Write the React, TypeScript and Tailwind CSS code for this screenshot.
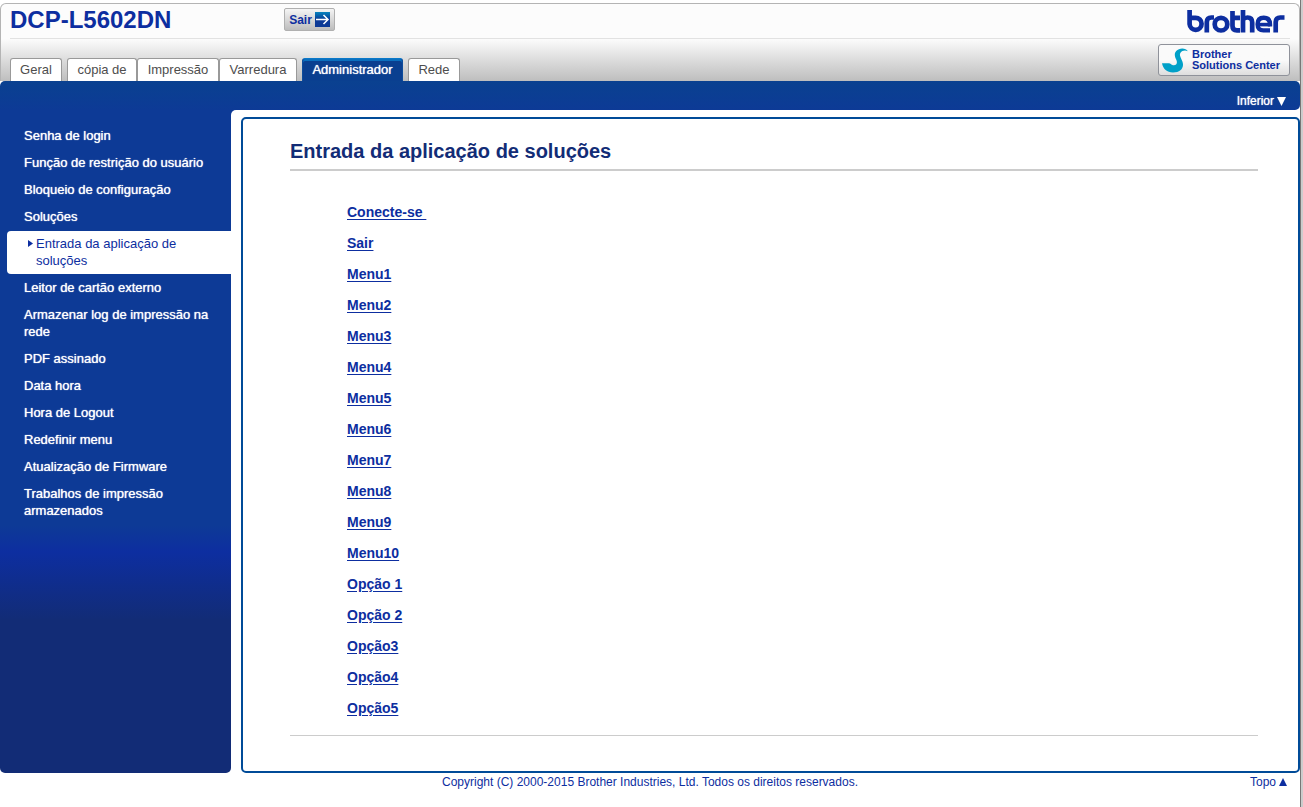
import React from "react";

const tabs = [
  { label: "Geral", width: "w-[52px]", gap: "mr-[5px]" },
  { label: "cópia de", width: "w-[70px]", gap: "" },
  { label: "Impressão", width: "w-[82px]", gap: "" },
  { label: "Varredura", width: "w-[78px]", gap: "mr-[5px]" },
  { label: "Administrador", width: "w-[101px]", gap: "mr-[5px]", active: true },
  { label: "Rede", width: "w-[52px]", gap: "" },
];

const sideLinks = [
  "Senha de login",
  "Função de restrição do usuário",
  "Bloqueio de configuração",
  "Soluções",
  "Entrada da aplicação de soluções",
  "Leitor de cartão externo",
  "Armazenar log de impressão na rede",
  "PDF assinado",
  "Data hora",
  "Hora de Logout",
  "Redefinir menu",
  "Atualização de Firmware",
  "Trabalhos de impressão armazenados",
];

const menuLinks = [
  "Conecte-se\u00a0",
  "Sair",
  "Menu1",
  "Menu2",
  "Menu3",
  "Menu4",
  "Menu5",
  "Menu6",
  "Menu7",
  "Menu8",
  "Menu9",
  "Menu10",
  "Opção 1",
  "Opção 2",
  "Opção3",
  "Opção4",
  "Opção5",
];

function BrotherLogo() {
  return (
    <svg
      role="img"
      aria-label="brother"
      className="h-[24px] w-[98px]"
      viewBox="0 0 98 24"
      fill="none"
      stroke="#0d2ea0"
      strokeWidth="4.7"
    >
      <path d="M2.600 0V14.200a6 6 0 1 0 6-6.400H3.500" />
      <path d="M19.800 22.500V12q0-4.500 4.500-4.500H27" />
      <ellipse cx="34" cy="14.200" rx="6.300" ry="6.300" />
      <path d="M45.500 1V16q0 4.400 4.400 4.400H53M45.500 7.800H53" />
      <path d="M56 0V22.500M56 9.500q2-2 4.500-2 4.700 0 4.700 5V22.500" />
      <path d="M71 14.600h12" strokeWidth="3.6" />
      <path d="M83 16.400v-1.800q0-6.800-6.200-6.800t-6.200 6.400 6.200 6.200H83" strokeWidth="4.400" />
      <path d="M88.700 22.500V12q0-4.500 4.500-4.500H97.500" />
    </svg>
  );
}

function SolutionsMark() {
  return (
    <svg aria-hidden="true" className="h-[25px] w-[27px] shrink-0" viewBox="0 0 27 25" fill="#00a0c8">
      <path d="M25.800 3.300C24-.3 17.300-.5 14.200 3c-2.500 3-1.200 6 .2 9 1.400 3.500-.2 5.700-3.400 5.200C9 16.800 8.500 15.300 7 15.300H0c1 5.700 5 9.200 11 9.200 8 0 11.700-5.300 9.300-11.300-1.600-4-3.300-6-1.800-8.400 1.500-2.200 4.700-2.900 7.300-1.500Z" />
    </svg>
  );
}

export default function App() {
  return (
    <div className="flex min-h-screen bg-white font-['Liberation_Sans',Arial,sans-serif] text-[#0d2ea0]">
      <div className="flex min-w-0 flex-1 flex-col">
        <header className="mt-[3px] rounded-t-[6px] border border-b-0 border-[#b4b4b4] bg-linear-to-b from-[#fcfcfc] from-45% to-[#bebebe]">
          <div className="mx-[9px] flex h-[35px] items-start border-b border-[#e2e2e2]">
            <h1 className="w-[274px] text-[24px] leading-[32px] font-bold">DCP-L5602DN</h1>
            <button
              type="button"
              className="mt-1 flex h-[23px] w-[51px] items-center justify-center gap-[3px] rounded-[2px] border border-[#b0b0b0] bg-linear-to-b from-[#f5f5f5] to-[#bdbdbd] text-[12px] font-bold"
            >
              Sair
              <svg aria-hidden="true" className="size-[15px] bg-linear-to-b from-[#0a83bd] to-[#0d3a96] to-50%" viewBox="0 0 15 15" fill="none" stroke="white" strokeWidth="1.5">
                <path d="M1 7.500h12M8.500 3l4.500 4.500L8.500 12" />
              </svg>
            </button>
            <div className="mt-[6px] mr-[5px] ml-auto">
              <BrotherLogo />
            </div>
          </div>
          <div className="flex h-[42px] items-end justify-between pr-[9px] pl-[9px]">
            <nav aria-label="Seções" className="flex items-end">
              {tabs.map((t) => (
                <a
                  key={t.label}
                  href="#"
                  className={`flex h-[23px] items-center justify-center rounded-t-[3px] border border-b-0 whitespace-nowrap ${t.width} ${t.gap} ${
                    t.active
                      ? "border-[#0d4c9c] border-t-[#0a78c8] bg-[#0a3f90] text-[13px] text-white shadow-[inset_0_2px_0_#0a6fbe] [text-shadow:0_0_1px_white]"
                      : "border-[#999999] bg-white text-[13px] text-[#4d4d4d]"
                  }`}
                >
                  {t.label}
                </a>
              ))}
            </nav>
            <a
              href="#"
              className="mb-[5px] flex h-[32px] w-[132px] items-center gap-[3px] rounded-[3px] border border-[#8f929a] bg-linear-to-b from-[#fafafa] from-50% to-[#dedede] pl-[3px] text-[11px] leading-[11px] font-bold"
            >
              <SolutionsMark />
              <span>
                Brother
                <br />
                Solutions Center
              </span>
            </a>
          </div>
        </header>

        <div className="flex h-[29px] items-end justify-end rounded-t-[5px] rounded-br-[5px] bg-linear-to-b from-[#0a4190] to-[#0d3a96] pr-[14px]">
          <a href="#" className="flex items-center gap-[3px] text-[12px] leading-[17px] text-white [text-shadow:0_0_1px_white]">
            Inferior
            <svg aria-hidden="true" className="h-[9px] w-[9px]" viewBox="0 0 9 9" fill="currentColor">
              <path d="M0 0h9L4.500 9z" />
            </svg>
          </a>
        </div>

        <div className="flex bg-[linear-gradient(#0d3a96,#0d3a96)] bg-size-[240px_10px] bg-no-repeat">
          <nav
            aria-label="Administrador"
            className="w-[231px] shrink-0 rounded-b-[5px] bg-[linear-gradient(to_bottom,#0d3a96_0px,#0d3a96_415px,#0d2ea0_442px,#122c76_510px)] pt-[12px]"
          >
            <ul>
              {sideLinks.map((label) => (
                <li key={label}>
                  {label.startsWith("Entrada") ? (
                    <a href="#" aria-current="page" className="mt-px ml-[7px] flex rounded-l-[4px] bg-white pt-1 pr-8 pb-[5px] pl-[21px] text-[13px] leading-[17px]">
                      <svg aria-hidden="true" className="mt-[5px] mr-[3px] h-[7px] w-[5px] shrink-0" viewBox="0 0 5 7" fill="currentColor">
                        <path d="M0 0l5 3.500L0 7z" />
                      </svg>
                      {label}
                    </a>
                  ) : (
                    <a href="#" className="block py-[5px] pr-4 pl-6 text-[13px] leading-[17px] text-white [text-shadow:0_0_1px_white]">
                      {label}
                    </a>
                  )}
                </li>
              ))}
            </ul>
          </nav>

          <div className="flex min-w-0 flex-1 flex-col rounded-tl-[5px] bg-white pt-[7px] pl-[10px]">
            <main className="flex-1 rounded-[5px] border-2 border-[#004b98] pr-[40px] pb-[35px] pl-[47px]">
              <h2 className="border-b-2 border-[#cccccc] pt-5 pb-[5px] text-[20px] leading-[25px] font-bold text-[#122c76]">
                Entrada da aplicação de soluções
              </h2>
              <ul className="border-b border-[#cccccc] pt-[26px] pb-[11px] pl-[57px]">
                {menuLinks.map((label) => (
                  <li key={label} className="h-[31px] text-[14px] leading-[31px] font-bold">
                    <a href="#" className="underline underline-offset-2">{label}</a>
                  </li>
                ))}
              </ul>
            </main>
          </div>
        </div>

        <footer className="flex items-center justify-between pr-[13px] text-[12px] leading-[18px]">
          <span className="w-[50px]" />
          <p>Copyright (C) 2000-2015 Brother Industries, Ltd. Todos os direitos reservados.</p>
          <a href="#" className="flex items-center gap-[3px]">
            Topo
            <svg aria-hidden="true" className="h-[8px] w-[8px]" viewBox="0 0 8 8" fill="currentColor">
              <path d="M4 0l4 8H0z" />
            </svg>
          </a>
        </footer>
      </div>
      <div className="w-[3px] shrink-0 border-l border-[#777777] bg-[#cccccc]" />
    </div>
  );
}
